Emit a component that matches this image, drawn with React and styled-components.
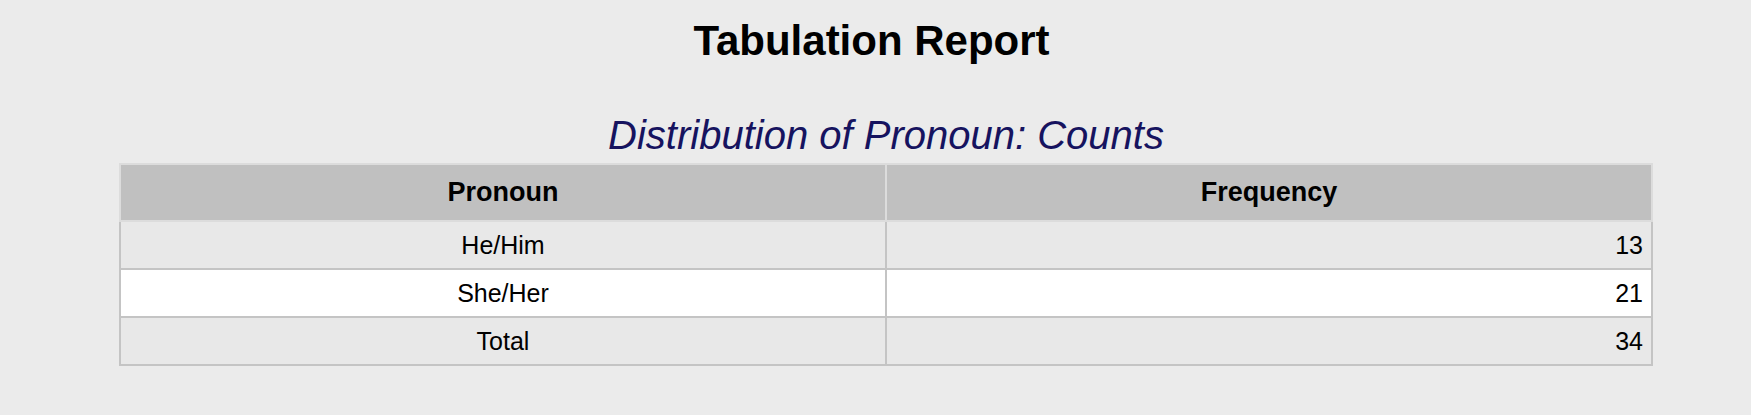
import React from 'react';
import styled, { createGlobalStyle } from 'styled-components';

const GlobalStyle = createGlobalStyle`
  body {
    margin: 0;
    background: #ebebeb;
    font-family: "Liberation Sans", Arial, sans-serif;
    color: #000;
  }
`;

const rows = [
  { label: 'He/Him', count: 13 },
  { label: 'She/Her', count: 21 },
  { label: 'Total', count: 34 },
];

function App() {
  return (
    <>
      <GlobalStyle />
      <Page>
        <Title>Tabulation Report</Title>
        <Table>
          <Caption>Distribution of Pronoun: Counts</Caption>
          <thead>
            <tr>
              <HeadCell>Pronoun</HeadCell>
              <HeadCell>Frequency</HeadCell>
            </tr>
          </thead>
          <tbody>
            {rows.map((row, idx) =>
              <Row key={row.label} striped={idx % 2 === 0}>
                <Cell>{row.label}</Cell>
                <Cell align="right">{row.count}</Cell>
              </Row>
            )}
          </tbody>
        </Table>
      </Page>
    </>
  );
}

export default App;

const Page = styled.div`
  padding: 17px 98px 40px 119px;
`;

const Title = styled.h1`
  margin: 0 0 48px -119px;
  width: 1751px;
  box-sizing: border-box;
  padding-right: 8px;
  text-align: center;
  font-size: 42px;
  font-weight: bold;
  line-height: 47px;
`;

const Table = styled.table`
  width: 100%;
  border-collapse: collapse;
`;

const Caption = styled.caption`
  font-size: 40px;
  font-style: italic;
  color: #16135f;
  line-height: 46px;
  padding-bottom: 5px;
`;

const HeadCell = styled.th`
  width: 50%;
  height: 55px;
  padding: 0 8px;
  background: #c0c0c0;
  border: 2px solid #dcdcdc;
  font-size: 27px;
  font-weight: bold;
  text-align: center;
`;

const Row = styled.tr`
  background: ${p => (p.striped ? '#e8e8e8' : '#ffffff')};
`;

const Cell = styled.td`
  height: 46px;
  padding: 0 8px;
  border: 2px solid #c4c4c4;
  font-size: 25px;
  text-align: ${p => p.align || 'center'};
`;
